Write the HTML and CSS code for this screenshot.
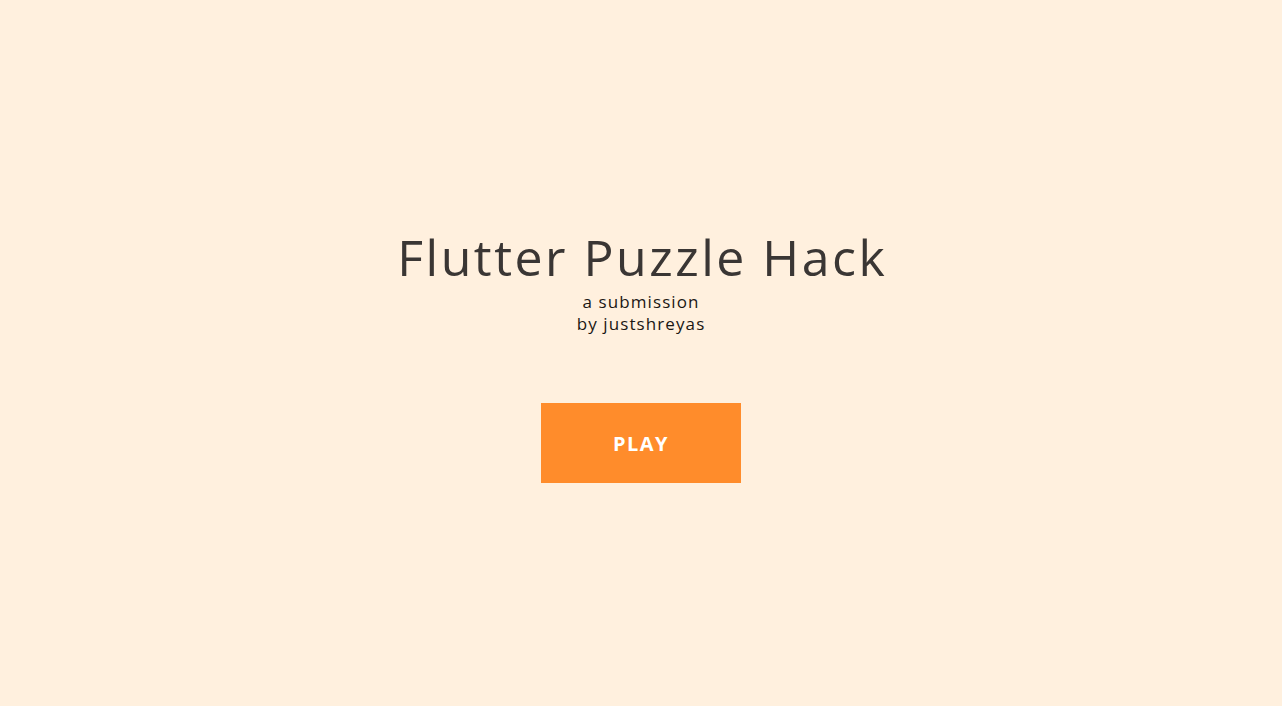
FILE: index.html
```html
<!DOCTYPE html>
<html>
<head>
<meta charset="utf-8">
<link rel="stylesheet" href="styles.css">
</head>
<body>
<main class="screen">
  <h1 class="title">Flutter Puzzle Hack</h1>
  <p class="subtitle">a submission<br>by justshreyas</p>
  <button class="play">PLAY</button>
</main>
</body>
</html>
```
FILE: styles.css
```css
html, body {
  margin: 0;
  padding: 0;
  height: 100%;
}
body {
  background: #fff0de;
  font-family: "Open Sans", "Noto Sans", sans-serif;
}
.screen {
  height: 706px;
  display: flex;
  flex-direction: column;
  align-items: center;
  box-sizing: border-box;
  padding-top: 230px;
}
.title {
  margin: 0;
  font-weight: 400;
  font-size: 50px;
  line-height: 54px;
  color: #3a3634;
  letter-spacing: 2.5px;
  padding-left: 2.5px;
}
.subtitle {
  margin: 7px 0 0;
  text-align: center;
  font-size: 17px;
  font-weight: 500;
  line-height: 22px;
  color: #1a1714;
  letter-spacing: 1.1px;
}
.play {
  margin-top: 68px;
  width: 200px;
  height: 80px;
  border: none;
  background: #ff8c2b;
  color: #fff;
  font-family: "Open Sans", "Noto Sans", sans-serif;
  font-weight: 700;
  font-size: 20px;
  letter-spacing: 1.5px;
  padding: 0;
}
```
